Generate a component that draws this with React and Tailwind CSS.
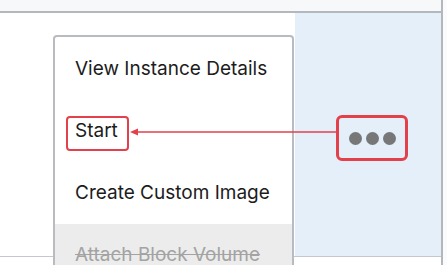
import React from "react";

const items = [
  { label: "View Instance Details" },
  { label: "Start" },
  { label: "Create Custom Image" },
  { label: "Attach Block Volume", disabled: true },
];

export default function App() {
  return (
    <div
      className="relative w-[447px] h-[265px] overflow-hidden bg-white flex"
      style={{ fontFamily: "Inter, 'Noto Sans', sans-serif" }}
    >
      {/* Table */}
      <div className="w-[441px] flex flex-col">
        <div className="h-[13px] bg-[#f7f8f9] border-b-2 border-[#b4b8bc]" />
        <div className="flex h-[244px] border-b border-[#c4c8cc]">
          <div className="flex-1 bg-white" />
          <div className="w-[146px] bg-[#e4effa]" />
        </div>
        <div className="flex-1 bg-white" />
      </div>
      <div className="w-[2px] bg-[#b4b8bc]" />
      <div className="flex-1 bg-[#fafbfc]" />

      {/* Action menu */}
      <div className="absolute left-[53px] top-[35px] w-[241px] bg-white border-2 border-[#b8bcc0] rounded-[4px] overflow-hidden pt-[1px]">
        {items.map((item) => (
          <div
            key={item.label}
            className={`h-[62px] flex items-center pl-[20px] text-[19px] ${
              item.disabled
                ? "bg-[#ececec] text-[#a3a3a3] line-through"
                : "text-[#1c1c1c]"
            }`}
          >
            {item.label}
          </div>
        ))}
      </div>

      {/* Annotations */}
      <div className="absolute left-[66px] top-[116px] w-[63px] h-[35px] border-2 border-[#e2414b] rounded-[4px]" />
      <svg
        className="absolute left-[128px] top-[124px]"
        width="212"
        height="16"
        viewBox="0 0 212 16"
      >
        <line x1="8" y1="8" x2="210" y2="8" stroke="#e2414b" strokeWidth="1.5" />
        <polygon points="2,8 10,4.5 10,11.5" fill="#e2414b" />
      </svg>
      <div className="absolute left-[336px] top-[115px] w-[72px] h-[46px] border-[3px] border-[#e2414b] rounded-[6px] flex items-center justify-center gap-[4px]">
        <span className="w-[13px] h-[13px] rounded-full bg-[#777]" />
        <span className="w-[13px] h-[13px] rounded-full bg-[#777]" />
        <span className="w-[13px] h-[13px] rounded-full bg-[#777]" />
      </div>
    </div>
  );
}
